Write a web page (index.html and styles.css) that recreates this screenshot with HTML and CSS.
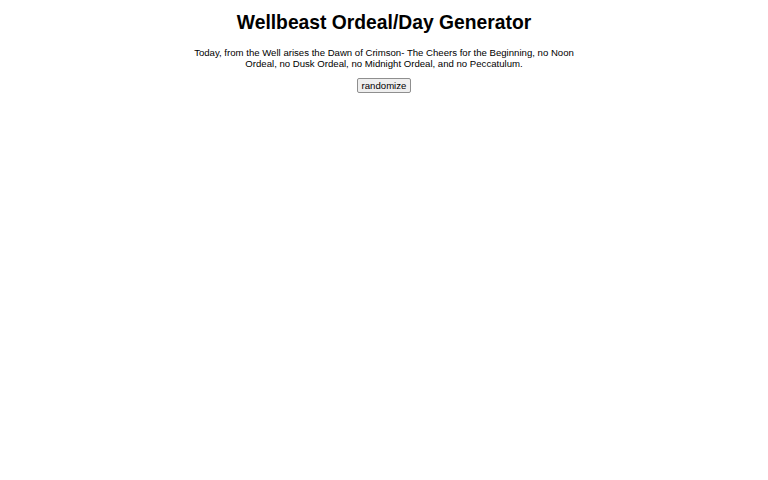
FILE: index.html
```html
<!DOCTYPE html>
<html lang="en">
<head>
  <meta charset="UTF-8" />
  <meta name="viewport" content="width=device-width, initial-scale=1.0" />
  <title>Wellbeast Ordeal/Day Generator</title>
  <link rel="stylesheet" href="styles.css">
</head>
<body>
  <div class="container">
    <h1>Wellbeast Ordeal/Day Generator</h1>
    <p id="result">Today, from the Well arises the Dawn of Crimson- The Cheers for the Beginning, no Noon Ordeal, no Dusk Ordeal, no Midnight Ordeal, and no Peccatulum.</p>
    <button class="btn">randomize</button>
  </div>
</body>
</html>
```

FILE: styles.css
```css
body {
  font-family: "Liberation Sans", Arial, sans-serif;
  background: #ffffff;
  color: #000000;
  margin: 8px;
}

.container {
  display: flex;
  flex-direction: column;
  align-items: center;
  text-align: center;
}

h1 {
  font-size: 19.3px;
  margin: 3px 0 0;
  line-height: 24px;
}

#result {
  max-width: 384px;
  font-size: 9.6px;
  line-height: 11px;
  margin: 12px 0 0;
}

.btn {
  font-family: "Liberation Sans", Arial, sans-serif;
  font-size: 9.6px;
  line-height: 11px;
  margin-top: 9px;
  padding: 1px 4px;
  color: #000000;
  background: #efefef;
  border: 1px solid #8f8f8f;
  border-radius: 2px;
}
```
